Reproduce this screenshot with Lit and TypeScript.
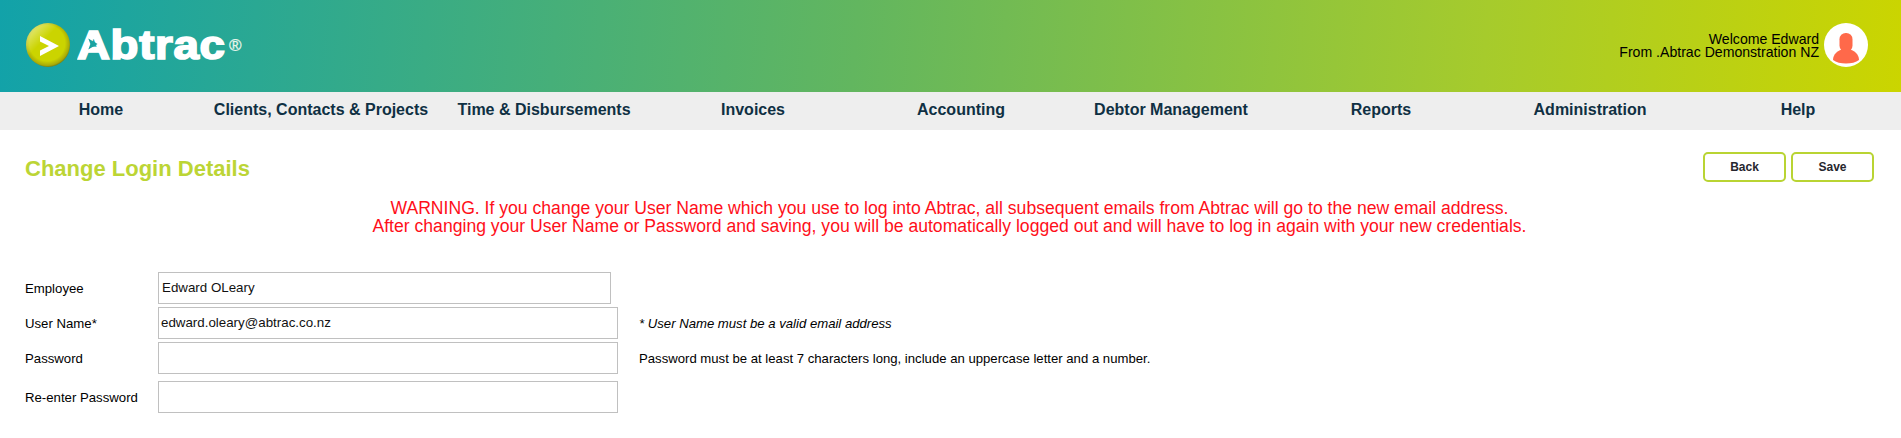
import { LitElement, html, css } from "lit";
import { customElement } from "lit/decorators.js";

const NAV = [
  ["Home", 202], ["Clients, Contacts & Projects", 238], ["Time & Disbursements", 208],
  ["Invoices", 210], ["Accounting", 206], ["Debtor Management", 214],
  ["Reports", 206], ["Administration", 212], ["Help", 204],
] as const;

@customElement("app-root")
export class AppRoot extends LitElement {
  static styles = css`
    :host { display: block; font-family: "Liberation Sans", Arial, sans-serif; color: #000; background: #fff; height: 438px; overflow: hidden; }
    .header { height: 92px; box-sizing: border-box; padding: 23px 33px 0 26px; display: flex; background: linear-gradient(95deg, #12a2a9 0%, #62b65f 45%, #a6cb2c 78%, #cbd500 100%); }
    .logo-mark { width: 44px; height: 44px; flex: none; display: block; }
    .wordmark { position: relative; margin: 0 0 0 7px; color: #fff; font-weight: 700; font-size: 40px; line-height: 44px; height: 44px; width: 151px; letter-spacing: 0.6px; -webkit-text-stroke: 1.7px #fff; flex: none; transform: scaleX(1.14); transform-origin: left center; }
    .chev { position: absolute; left: 9px; top: 14px; width: 10px; height: 14px; }
    .reg { font-size: 17px; line-height: 44px; color: #e6f5ea; -webkit-text-stroke: 0.3px #e6f5ea; margin: 1px 0 0 1px; flex: none; }
    .user { margin-left: auto; display: flex; gap: 6px; align-items: center; height: 44px; }
    .welcome { text-align: right; font-size: 14.1px; line-height: 13px; color: #000; margin: 2px -1px 0 0; }
    .avatar { width: 44px; height: 44px; display: block; }
    .nav { display: flex; height: 38px; box-sizing: border-box; padding-bottom: 2px; background: #eee; align-items: center; }
    .nav div { text-align: center; font-weight: 700; font-size: 16px; color: #0f3043; white-space: nowrap; flex: none; }
    .main { padding: 22px 27px 0 25px; }
    .top { display: flex; align-items: flex-start; justify-content: space-between; }
    h1 { margin: 5px 0 0; font-size: 22px; line-height: 24px; font-weight: 700; color: #bcd535; }
    .btns { display: flex; gap: 5px; }
    button { width: 83px; height: 30px; box-sizing: border-box; border: 2px solid #b9d433; border-radius: 5px; background: #fff; font: 700 12px "Liberation Sans", Arial, sans-serif; color: #26262e; padding: 0; }
    .warn { margin: 17px 0 0; text-align: center; color: #ff0f1a; font-size: 17.6px; line-height: 18px; }
    .form { margin-top: 37px; font-size: 13.2px; }
    .row { display: grid; grid-template-columns: 133px 460px 1fr; align-items: center; }
    .input { box-sizing: border-box; border: 1px solid #c0c0c0; height: 32px; padding: 0 2px; font-size: 13.33px; line-height: 30px; color: #111; }
    .r1 .input { width: 453px; padding-left: 3px; }
    .r2 { margin-top: 3px; }
    .r3 { margin-top: 3px; }
    .r4 { margin-top: 7px; }
    .note { padding-left: 21px; font-size: 13.15px; }
    .em { font-style: italic; }
  `;

  render() {
    return html`
      <div class="header">
        <svg class="logo-mark" viewBox="0 0 44 44">
          <defs>
            <radialGradient id="g" cx="0.48" cy="0.46" r="0.56">
              <stop offset="0.72" stop-color="#cbd400"/>
              <stop offset="0.9" stop-color="#a8ab08"/>
              <stop offset="1" stop-color="#5f6a10"/>
            </radialGradient>
            <linearGradient id="h" x1="0" y1="0" x2="1" y2="1">
              <stop offset="0" stop-color="#fff" stop-opacity="0.65"/>
              <stop offset="0.4" stop-color="#fff" stop-opacity="0"/>
            </linearGradient>
          </defs>
          <circle cx="22" cy="22" r="22" fill="url(#g)"/>
          <circle cx="22" cy="22" r="22" fill="url(#h)"/>
          <path d="M14 13 L33 23 L14 33 L14 27.5 L23 23 L14 18.5 Z" fill="#fff"/>
        </svg>
        <div class="wordmark">Abtrac
          <svg class="chev" viewBox="0 0 11 14"><path d="M1 1 L10 7 L1 13 L3 7 Z" fill="#1aa2a0"/></svg>
        </div>
        <div class="reg">®</div>
        <div class="user">
          <div class="welcome">Welcome Edward<br />From .Abtrac Demonstration NZ</div>
          <svg class="avatar" viewBox="0 0 44 44">
            <circle cx="22" cy="22" r="22" fill="#fff"/>
            <rect x="15.5" y="10" width="13" height="19" rx="6.2" fill="#ff694a"/>
            <path d="M9 37 c0 -6 5 -9.5 10 -11 h6 c5 1.5 10 5 10 11 c-3 2.5 -8 3.5 -13 3.5 s-10 -1 -13 -3.5 Z" fill="#ff694a"/>
          </svg>
        </div>
      </div>
      <div class="nav">
        ${NAV.map(([t, w]) => html`<div style="width:${w}px">${t}</div>`)}
      </div>
      <div class="main">
        <div class="top">
          <h1>Change Login Details</h1>
          <div class="btns"><button>Back</button><button>Save</button></div>
        </div>
        <p class="warn">WARNING. If you change your User Name which you use to log into Abtrac, all subsequent emails from Abtrac will go to the new email address.<br />After changing your User Name or Password and saving, you will be automatically logged out and will have to log in again with your new credentials.</p>
        <div class="form">
          <div class="row r1"><div>Employee</div><div class="input">Edward OLeary</div><div></div></div>
          <div class="row r2"><div>User Name*</div><div class="input">edward.oleary@abtrac.co.nz</div><div class="note em">* User Name must be a valid email address</div></div>
          <div class="row r3"><div>Password</div><div class="input"></div><div class="note">Password must be at least 7 characters long, include an uppercase letter and a number.</div></div>
          <div class="row r4"><div>Re-enter Password</div><div class="input"></div><div></div></div>
        </div>
      </div>
    `;
  }
}
